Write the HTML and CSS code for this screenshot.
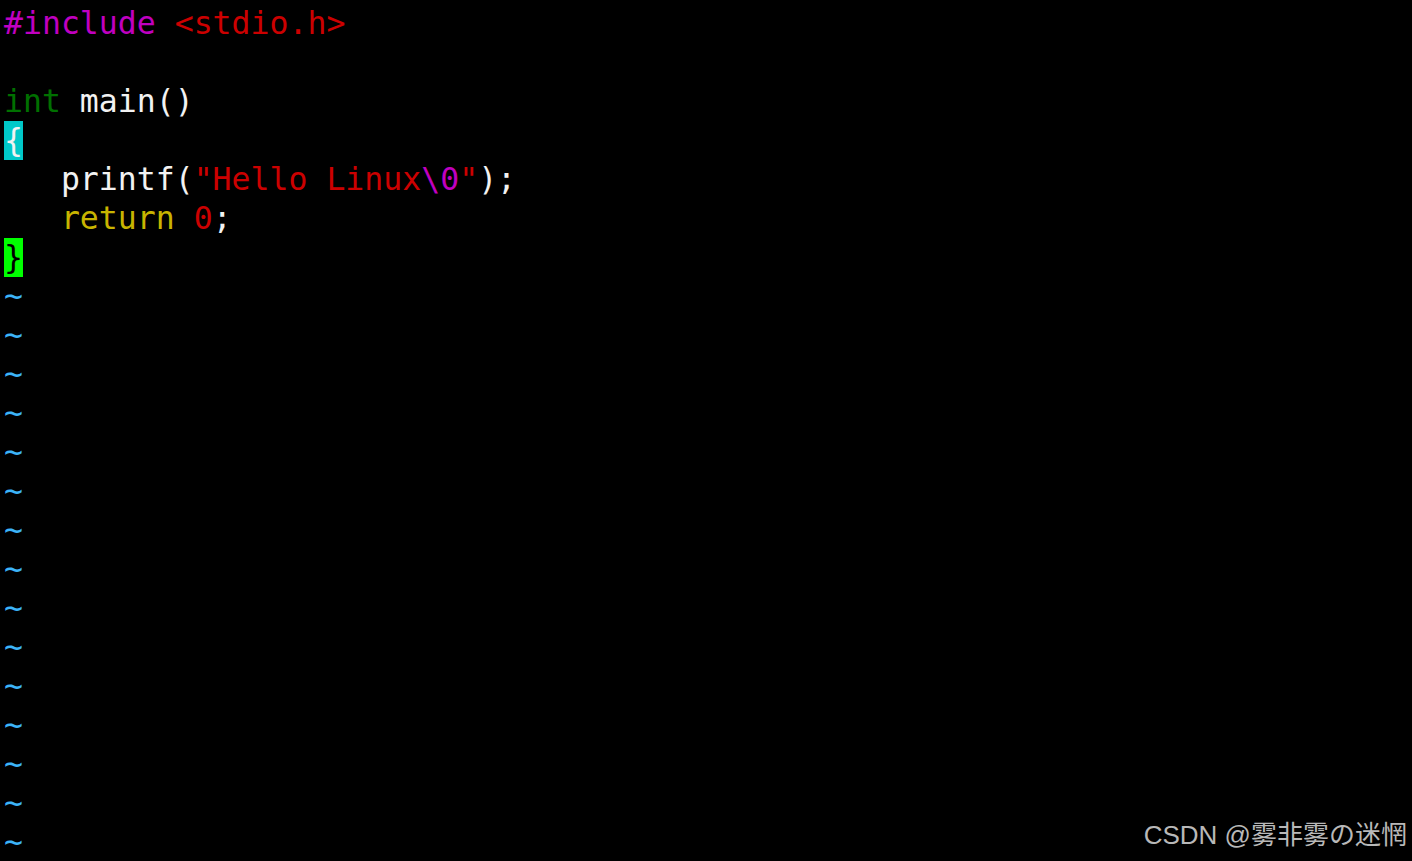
FILE: index.html
```html
<!DOCTYPE html>
<html>
<head>
<meta charset="utf-8">
<link rel="stylesheet" href="styles.css">
</head>
<body>
<div class="term">
<div class="row"><span class="pre">#include</span> <span class="str">&lt;stdio.h&gt;</span></div>
<div class="row"></div>
<div class="row"><span class="type">int</span> main()</div>
<div class="row"><span class="cur-cyan">{</span></div>
<div class="row">   printf(<span class="str">"Hello Linux</span><span class="pre">\0</span><span class="str">"</span>);</div>
<div class="row">   <span class="kw">return</span> <span class="str">0</span>;</div>
<div class="row"><span class="cur-green">}</span></div>
<div class="row tilde">~</div>
<div class="row tilde">~</div>
<div class="row tilde">~</div>
<div class="row tilde">~</div>
<div class="row tilde">~</div>
<div class="row tilde">~</div>
<div class="row tilde">~</div>
<div class="row tilde">~</div>
<div class="row tilde">~</div>
<div class="row tilde">~</div>
<div class="row tilde">~</div>
<div class="row tilde">~</div>
<div class="row tilde">~</div>
<div class="row tilde">~</div>
<div class="row tilde">~</div>
</div>
<div class="watermark">CSDN @雾非雾の迷惘</div>
</body>
</html>
```
FILE: styles.css
```css
html, body {
  margin: 0;
  padding: 0;
  background: #000;
  width: 1412px;
  height: 861px;
  overflow: hidden;
}
.term {
  padding: 4px 0 0 4px;
  font-family: "DejaVu Sans Mono", monospace;
  font-size: 31.5px;
  color: #f2f2f2;
}
.row {
  height: 39px;
  line-height: 39px;
  white-space: pre;
}
.pre { color: #c000c0; }
.str { color: #cc0000; }
.type { color: #007000; }
.kw { color: #c8b400; }
.tilde { color: #3cb4f8; }
.cur-cyan {
  background: #00c8c8;
  color: #f2f2f2;
  display: inline-block;
  height: 39px;
}
.cur-green {
  background: #00ff00;
  color: #000;
  display: inline-block;
  height: 39px;
}
.watermark {
  position: absolute;
  right: 5px;
  bottom: 10px;
  font-family: "Liberation Sans", "Noto Sans CJK SC", sans-serif;
  font-size: 26px;
  color: #b8b8b8;
  line-height: 32px;
}
```
